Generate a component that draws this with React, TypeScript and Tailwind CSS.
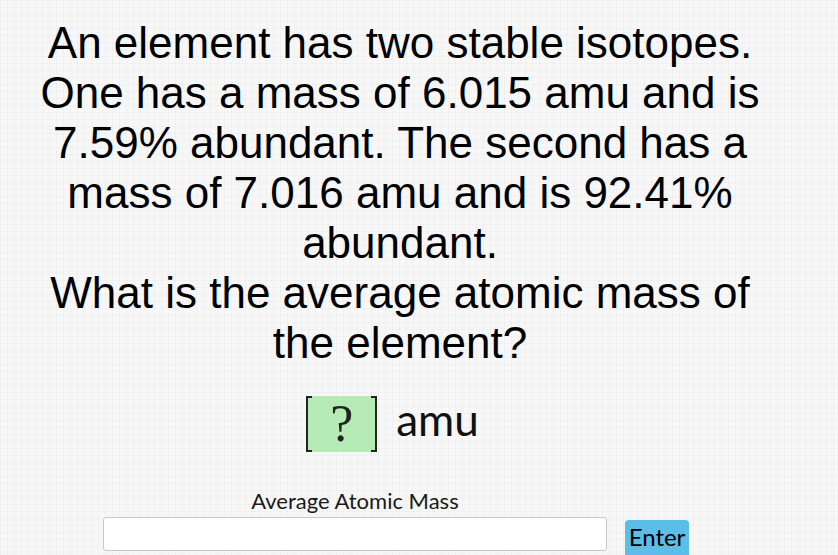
export default function App() {
  return (
    <div className="w-[838px] h-[555px] overflow-hidden bg-[#f7f7f8] bg-[linear-gradient(rgba(0,0,0,0.025)_1px,transparent_1px),linear-gradient(90deg,rgba(0,0,0,0.025)_1px,transparent_1px)] bg-[size:7px_7px]">
      <div className="w-[800px] flex flex-col items-center">
        {/* question */}
        <div className="pt-[18px] text-center text-black text-[44px] leading-[50px] font-['Liberation_Sans',Arial,sans-serif] whitespace-nowrap">
          An element has two stable isotopes.
          <br />
          One has a mass of 6.015 amu and is
          <br />
          7.59% abundant. The second has a
          <br />
          mass of 7.016 amu and is 92.41%
          <br />
          abundant.
          <br />
          What is the average atomic mass of
          <br />
          the element?
        </div>

        {/* answer placeholder */}
        <div className="mt-[28px] flex items-center ml-[-15px]">
          <div className="flex items-stretch h-[56px] bg-[#b6ebb5]">
            <div className="w-[6px] border-l-[2px] border-t-[2px] border-b-[2px] border-[#222]" />
            <div className="w-[59px] flex items-center justify-center text-[52px] leading-none text-[#222] font-['Liberation_Serif','DejaVu_Serif',serif]">
              ?
            </div>
            <div className="w-[6px] border-r-[2px] border-t-[2px] border-b-[2px] border-[#222]" />
          </div>
          <span className="ml-[19px] text-[44px] leading-none text-[#111] font-['Lato',sans-serif] pb-[10px]">
            amu
          </span>
        </div>
      </div>

      {/* input area */}
      <div className="mt-[36px] w-[710px] flex flex-col items-center">
        <div className="text-[22px] leading-[26px] text-[#1a1a1a] font-['Lato',sans-serif]">
          Average Atomic Mass
        </div>
      </div>
      <div className="flex items-start mt-[3px]">
        <input
          type="text"
          className="ml-[103px] w-[504px] h-[34px] bg-white border border-[#c8c8c8] rounded-[3px] outline-none"
        />
        <button className="ml-[18px] mt-[3px] w-[64px] h-[40px] bg-[#5bbde8] rounded-[4px] text-[24px] leading-[34px] text-black font-['Lato',sans-serif] flex items-start justify-center">
          Enter
        </button>
      </div>
    </div>
  );
}
